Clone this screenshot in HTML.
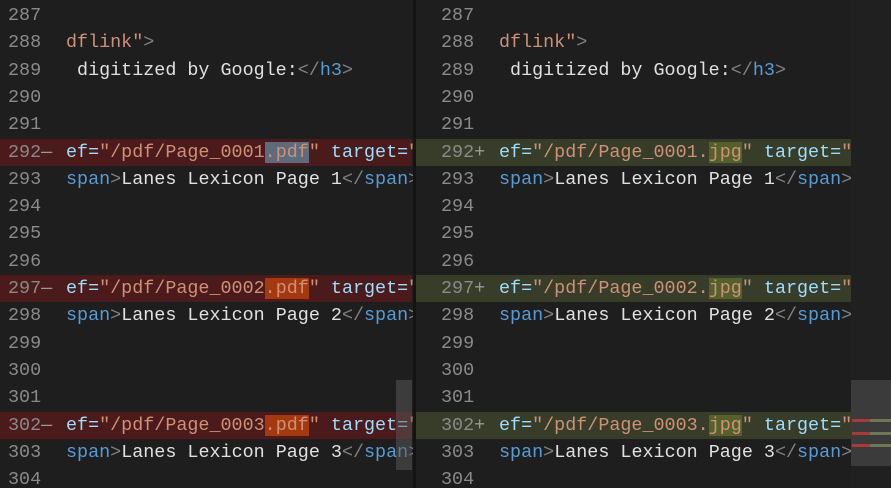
<!DOCTYPE html>
<html><head><meta charset="utf-8"><style>
body{margin:0;width:891px;height:488px;background:#1e1e1e;overflow:hidden;font-family:"Liberation Mono",monospace;font-size:18.4px;position:relative}
.pane{position:absolute;top:0;height:488px;overflow:hidden}
.row{position:absolute;left:0;height:27px;line-height:27px;white-space:pre;width:100%}
.ln{position:absolute;color:#8a8a8a}
.code{position:absolute;color:#e0e0e0}
.s{color:#ce9178}.t{color:#569cd6}.a{color:#9cdcfe}.g{color:#808080}.w{color:#e0e0e0}
.del{background:#4b1a1a}.add{background:#373d29}
.hd1{background:#5d6b7c}.hd2{background:#a4380f}.ha{background:#55602d}
</style></head><body>
<div class="pane" style="left:0;width:413px">
<div id="L"></div>
<div style="position:absolute;left:396px;top:380px;width:16px;height:90px;background:rgba(90,90,90,0.5)"></div>
</div>
<div style="position:absolute;left:413px;top:0;width:3px;height:488px;background:#141414"></div>
<div class="pane" style="left:416px;width:475px">
<div id="R"></div>
</div>
<div style="position:absolute;left:851px;top:0;width:40px;height:488px;background:#202020"></div>
<div style="position:absolute;left:851px;top:380px;width:40px;height:86px;background:#3b3b3b"></div>
<div style="position:absolute;left:852px;top:419px;width:18px;height:3px;background:#a83a3a"></div>
<div style="position:absolute;left:870px;top:419px;width:21px;height:3px;background:#6e7656"></div>
<div style="position:absolute;left:852px;top:432px;width:18px;height:3px;background:#a83a3a"></div>
<div style="position:absolute;left:870px;top:432px;width:21px;height:3px;background:#6e7656"></div>
<div style="position:absolute;left:852px;top:444px;width:18px;height:3px;background:#a83a3a"></div>
<div style="position:absolute;left:870px;top:444px;width:21px;height:3px;background:#6e7656"></div>
<script>
function build(id,left){
 var h='';
 for(var i=0;i<18;i++){
  var n=287+i,top=2+i*27.3,cls='',mark='',code='';
  var hl=[292,297,302].indexOf(n);
  if(n==288)code='<span class="s">dflink"</span><span class="g">&gt;</span>';
  if(n==289)code='<span class="w"> digitized by Google:</span><span class="g">&lt;/</span><span class="t">h3</span><span class="g">&gt;</span>';
  if(hl>=0){
   var num='000'+(hl+1);
   if(left){cls='del';mark='—';code='<span class="a">ef=</span><span class="s">"/pdf/Page_'+num+'<span class="'+(hl==0?'hd1':'hd2')+'">.pdf</span>"</span> <span class="a">target=</span><span class="s">"</span>';}
   else{cls='add';mark='+';code='<span class="a">ef=</span><span class="s">"/pdf/Page_'+num+'.<span class="ha">jpg</span>"</span> <span class="a">target=</span><span class="s">"</span>';}
  }
  if([293,298,303].indexOf(n)>=0){var k=(n-288)/5;code='<span class="t">span</span><span class="g">&gt;</span><span class="w">Lanes Lexicon Page '+k+'</span><span class="g">&lt;/</span><span class="t">span</span><span class="g">&gt;</span>';}
  var w=left?'412px':'435px';
  h+='<div class="row '+cls+'" style="top:'+top+'px;width:'+w+'"><span class="ln" style="left:'+(left?8:25)+'px">'+n+'<span style="color:#999;font-weight:lighter">'+mark+'</span></span><span class="code" style="left:'+(left?66:83)+'px">'+code+'</span></div>';
 }
 document.getElementById(id).innerHTML=h;
}
build('L',true);build('R',false);
</script>
</body></html>
